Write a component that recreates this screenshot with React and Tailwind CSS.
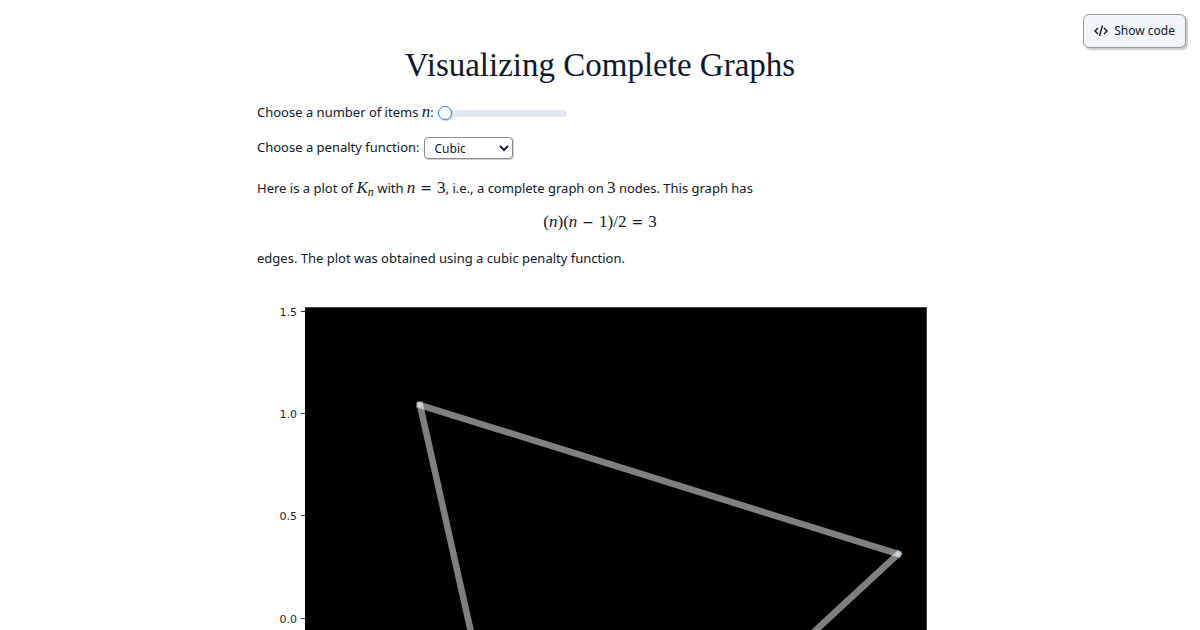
import { useState } from 'react';

const PENALTIES = ['Linear', 'Quadratic', 'Cubic'];

const TICKS = [
  { label: '1.5', y: 11 },
  { label: '1.0', y: 113 },
  { label: '0.5', y: 215 },
  { label: '0.0', y: 318 },
];

const NODES = [
  { x: 163, y: 105 },
  { x: 641, y: 254 },
  { x: 273, y: 595 },
];

const EDGES = [
  [0, 1],
  [1, 2],
  [2, 0],
];

function CodeIcon() {
  return (
    <svg
      viewBox="0 0 14 14"
      className="h-3.5 w-3.5"
      fill="none"
      stroke="currentColor"
      strokeWidth="1.4"
      aria-hidden="true"
    >
      <path d="M4 4 1 7 4 10M10 4 13 7 10 10M8.5 1.5 5.5 12" />
    </svg>
  );
}

function Var({ children }) {
  return <i className="font-['Liberation_Serif',serif] text-[17px] leading-none">{children}</i>;
}

function Num({ children }) {
  return <span className="font-['Liberation_Serif',serif] text-[17px] leading-none">{children}</span>;
}

function Op({ children }) {
  return <span className="mx-[5px] font-['DejaVu_Serif',serif] text-sm leading-none">{children}</span>;
}

function Plot() {
  return (
    <svg viewBox="0 0 686 660" className="block w-full" role="img" aria-label="Complete graph plot">
      <rect x="48" y="7" width="622" height="622" fill="#000" />
      <path d="M48 7.5H669.5V629" fill="none" stroke="#444" />
      {TICKS.map((tick) => (
        <g key={tick.label}>
          <path d={`M44 ${tick.y + 0.5}H48`} stroke="#333" />
          <text
            x="40"
            y={tick.y + 5}
            textAnchor="end"
            fill="#222"
            className="font-['DejaVu_Sans',sans-serif] text-[11px]"
          >
            {tick.label}
          </text>
        </g>
      ))}
      {EDGES.map(([a, b]) => (
        <line
          key={`${a}-${b}`}
          x1={NODES[a].x}
          y1={NODES[a].y}
          x2={NODES[b].x}
          y2={NODES[b].y}
          stroke="#fff"
          strokeOpacity="0.5"
          strokeWidth="6.5"
          strokeLinecap="square"
        />
      ))}
      {NODES.map((node) => (
        <circle key={node.x} cx={node.x} cy={node.y} r="2" fill="#c5dcea" />
      ))}
    </svg>
  );
}

export default function App() {
  const [n, setN] = useState(3);
  const [penalty, setPenalty] = useState('Cubic');

  return (
    <div className="relative min-h-screen bg-white font-['Noto_Sans',sans-serif] text-[13px] text-slate-900">
      <button
        type="button"
        className="absolute top-3.5 right-3.5 flex items-center gap-1.5 rounded-md border border-[#999] bg-slate-100 px-2.5 py-1.5 text-xs leading-5 shadow-[2px_2px_1px_#ccc]"
      >
        <CodeIcon />
        Show code
      </button>

      <main className="mx-auto max-w-[718px] px-4 pt-[45px]">
        <h1 className="text-center font-['Liberation_Serif',serif] text-[33px] leading-10">
          Visualizing Complete Graphs
        </h1>

        <div className="mt-4 flex h-6 items-center gap-1">
          <label htmlFor="n">
            Choose a number of items <Var>n</Var>:
          </label>
          <input
            id="n"
            type="range"
            min="3"
            max="20"
            value={n}
            onChange={(e) => setN(Number(e.target.value))}
            className="h-[7px] w-[129px] appearance-none rounded-full bg-slate-200 [&::-webkit-slider-thumb]:h-3.5 [&::-webkit-slider-thumb]:w-3.5 [&::-webkit-slider-thumb]:appearance-none [&::-webkit-slider-thumb]:rounded-full [&::-webkit-slider-thumb]:border [&::-webkit-slider-thumb]:border-blue-500 [&::-webkit-slider-thumb]:bg-white [&::-webkit-slider-thumb]:shadow-[1px_1px_1px_#ccc]"
          />
        </div>

        <div className="mt-[11px] flex h-6 items-center gap-1">
          <label htmlFor="penalty">Choose a penalty function:</label>
          <select
            id="penalty"
            value={penalty}
            onChange={(e) => setPenalty(e.target.value)}
            className="h-[22px] w-[89px] rounded-sm border border-[#888] bg-white pl-1.5 text-xs shadow-[1px_1px_1px_#ccc]"
          >
            {PENALTIES.map((name) => (
              <option key={name}>{name}</option>
            ))}
          </select>
        </div>

        <p className="mt-4 leading-6">
          Here is a plot of <Var>K</Var>
          <sub className="font-['Liberation_Serif',serif] text-xs italic">n</sub> with <Var>n</Var>
          <Op>=</Op>
          <Num>{n}</Num>, i.e., a complete graph on <Num>{n}</Num> nodes. This graph has
        </p>
        <p className="mt-2.5 text-center leading-6">
          <Num>(</Num>
          <Var>n</Var>
          <Num>)(</Num>
          <Var>n</Var>
          <Op>−</Op>
          <Num>1)/2</Num>
          <Op>=</Op>
          <Num>{(n * (n - 1)) / 2}</Num>
        </p>
        <p className="mt-3 leading-6">
          edges. The plot was obtained using a {penalty.toLowerCase()} penalty function.
        </p>

        <div className="mt-[30px]">
          <Plot />
        </div>
      </main>
    </div>
  );
}
